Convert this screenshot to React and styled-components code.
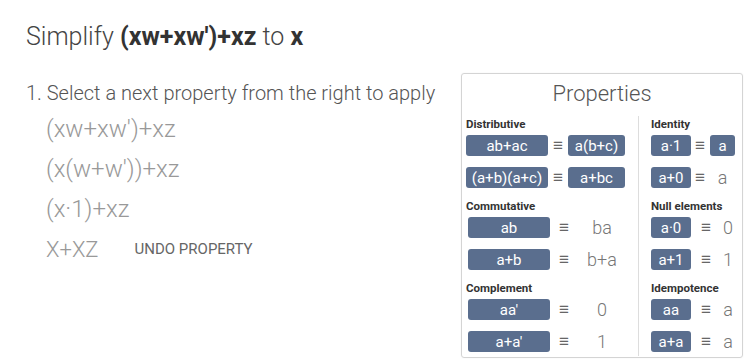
import React from "react";
import styled, { createGlobalStyle } from "styled-components";

const Global = createGlobalStyle`
  html, body { margin: 0; padding: 0; background: #fff; }
  body { font-family: Roboto, "Liberation Sans", sans-serif; }
`;

const Page = styled.div`
  width: 751px;
  height: 361px;
  display: flex;
  align-items: flex-start;
  box-sizing: border-box;
  padding: 0 8px 0 26px;
  overflow: hidden;
`;

const Left = styled.div`
  flex: 1;
  display: flex;
  flex-direction: column;
`;

const Title = styled.h1`
  margin: 21px 0 0;
  font-size: 25px;
  line-height: 32px;
  font-weight: 300;
  color: #444;
`;

const Strong = styled.b`
  font-weight: 700;
  color: #333;
`;

const Instruction = styled.div`
  margin-top: 28px;
  font-size: 20px;
  line-height: 24px;
  font-weight: 300;
  color: #555;
`;

const Steps = styled.div`
  margin-top: 4px;
  padding-left: 20px;
  display: flex;
  flex-direction: column;
`;

const Step = styled.div`
  display: flex;
  align-items: center;
  height: 40px;
  font-size: ${(p) => (p.$upper ? 22 : 24)}px;
  font-weight: 300;
  color: #999;
  text-transform: ${(p) => (p.$upper ? "uppercase" : "none")};
`;

const Undo = styled.button`
  margin-left: 36px;
  border: none;
  background: none;
  padding: 0;
  font-family: Roboto, "Liberation Sans", sans-serif;
  font-size: 15px;
  font-weight: 400;
  color: #666;
  text-transform: uppercase;
  cursor: pointer;
`;

const Panel = styled.div`
  margin-top: 73px;
  width: 282px;
  height: 285px;
  box-sizing: border-box;
  border: 1px solid #d4d4d4;
  border-radius: 3px;
  box-shadow: 0 0 2px rgba(0, 0, 0, 0.06);
  display: flex;
  flex-direction: column;
`;

const PanelTitle = styled.div`
  text-align: center;
  font-size: 22px;
  font-weight: 300;
  color: #555;
  line-height: 26px;
  margin-top: 7px;
`;

const PanelBody = styled.div`
  margin-top: 9px;
  display: grid;
  grid-template-columns: 176px 1fr;
`;

const Col = styled.div`
  display: flex;
  flex-direction: column;
  padding-left: ${(p) => p.$pad}px;
  padding-bottom: 4px;
  border-left: ${(p) => (p.$divider ? "1px solid #ddd" : "none")};
`;

const Section = styled.div`
  display: flex;
  flex-direction: column;
  margin-bottom: 10px;
  &:last-child { margin-bottom: 0; }
`;

const Heading = styled.div`
  font-size: 11.5px;
  font-weight: 700;
  color: #333;
  line-height: 16px;
  margin-bottom: 3px;
  margin-left: ${(p) => p.$indent || 0}px;
`;

const Rows = styled.div`
  display: grid;
  grid-template-columns: ${(p) => p.$cols};
  grid-auto-rows: 21px;
  row-gap: 11px;
  margin-left: ${(p) => p.$shift || 0}px;
`;

const Chip = styled.button`
  justify-self: center;
  width: ${(p) => p.$w}px;
  height: 21px;
  border: none;
  border-radius: 3px;
  background: #5a6e8e;
  color: #fff;
  font-family: Roboto, "Liberation Sans", sans-serif;
  font-size: 15px;
  font-weight: 400;
  padding: 0;
  display: flex;
  align-items: center;
  justify-content: center;
  cursor: pointer;
`;

const Equiv = styled.span`
  display: flex;
  align-items: center;
  justify-content: center;
  font-family: "DejaVu Sans", sans-serif;
  font-size: 17px;
  font-weight: 300;
  color: #666;
`;

const Plain = styled.span`
  display: flex;
  align-items: center;
  justify-content: center;
  font-size: 18px;
  font-weight: 300;
  color: #777;
`;

const Value = ({ v, w, chip }) =>
  chip ? <Chip $w={w}>{v}</Chip> : <Plain>{v}</Plain>;

const leftSections = [
  {
    name: "Distributive",
    cols: "82px 20px 57px",
    shift: 0,
    rows: [
      ["ab+ac", "a(b+c)", true],
      ["(a+b)(a+c)", "a+bc", true],
    ],
  },
  {
    name: "Commutative",
    cols: "82px 28px 48px",
    shift: 2,
    rows: [
      ["ab", "ba", false],
      ["a+b", "b+a", false],
    ],
  },
  {
    name: "Complement",
    cols: "82px 28px 48px",
    shift: 2,
    rows: [
      ["aa'", "0", false],
      ["a+a'", "1", false],
    ],
  },
];

const rightSections = [
  {
    name: "Identity",
    cols: "44px 14px 31px",
    shift: 0,
    rows: [
      ["a·1", "a", true],
      ["a+0", "a", false],
    ],
  },
  {
    name: "Null elements",
    cols: "44px 26px 18px",
    shift: 0,
    rows: [
      ["a·0", "0", false],
      ["a+1", "1", false],
    ],
  },
  {
    name: "Idempotence",
    cols: "44px 26px 18px",
    shift: 0,
    rows: [
      ["aa", "a", false],
      ["a+a", "a", false],
    ],
  },
];

const renderSections = (sections, lw, rw, indent) =>
  sections.map((s) => (
    <Section key={s.name}>
      <Heading $indent={indent}>{s.name}</Heading>
      <Rows $cols={s.cols} $shift={s.shift}>
        {s.rows.map(([a, b, chip]) => (
          <React.Fragment key={a}>
            <Chip $w={lw}>{a}</Chip>
            <Equiv>≡</Equiv>
            <Value v={b} chip={chip} w={rw} />
          </React.Fragment>
        ))}
      </Rows>
    </Section>
  ));

export default function App() {
  return (
    <>
      <Global />
      <Page>
        <Left>
          <Title>
            Simplify <Strong>(xw+xw')+xz</Strong> to <Strong>x</Strong>
          </Title>
          <Instruction>1. Select a next property from the right to apply</Instruction>
          <Steps>
            <Step>(xw+xw')+xz</Step>
            <Step>(x(w+w'))+xz</Step>
            <Step>(x·1)+xz</Step>
            <Step $upper>
              x+xz
              <Undo>Undo property</Undo>
            </Step>
          </Steps>
        </Left>
        <Panel>
          <PanelTitle>Properties</PanelTitle>
          <PanelBody>
            <Col $pad={4}>{renderSections(leftSections, 82, 57, 0)}</Col>
            <Col $pad={10} $divider>
              {renderSections(rightSections, 40, 25, 2)}
            </Col>
          </PanelBody>
        </Panel>
      </Page>
    </>
  );
}
